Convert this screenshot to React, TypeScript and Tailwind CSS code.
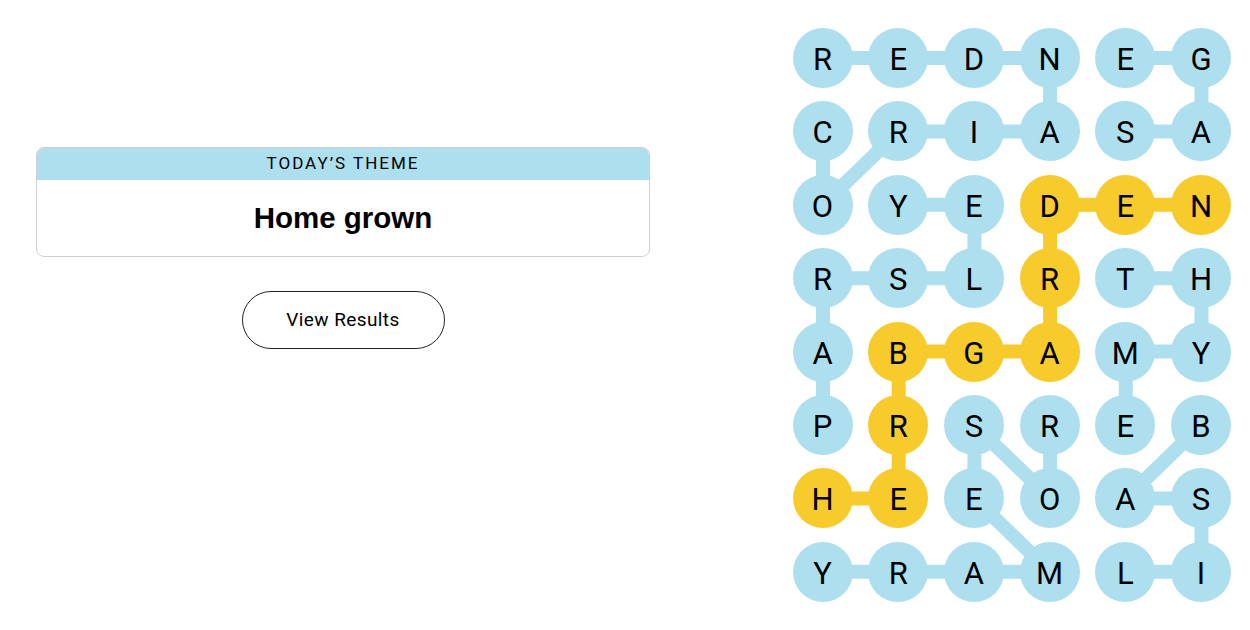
import React from "react";

const letters = [
  "REDNEG",
  "CRIASA",
  "OYEDEN",
  "RSLRTH",
  "ABGAMY",
  "PRSREB",
  "HEEOAS",
  "YRAMLI",
];

const BLUE = "#aedfee";
const YELLOW = "#f8cb2c";

type P = [number, number];
const words: { path: P[]; span?: boolean }[] = [
  { path: [[1, 0], [2, 0], [1, 1], [1, 2], [1, 3], [0, 3], [0, 2], [0, 1], [0, 0]] },
  { path: [[1, 4], [1, 5], [0, 5], [0, 4]] },
  { path: [[5, 0], [4, 0], [3, 0], [3, 1], [3, 2], [2, 2], [2, 1]] },
  { path: [[3, 4], [3, 5], [4, 5], [4, 4], [5, 4]] },
  { path: [[5, 5], [6, 4], [6, 5], [7, 5], [7, 4]] },
  { path: [[5, 3], [6, 3], [5, 2], [6, 2], [7, 3], [7, 2], [7, 1], [7, 0]] },
  { path: [[6, 0], [6, 1], [5, 1], [4, 1], [4, 2], [4, 3], [3, 3], [2, 3], [2, 4], [2, 5]], span: true },
];

const spanSet = new Set(words.filter((w) => w.span).flatMap((w) => w.path.map(([r, c]) => `${r}-${c}`)));

const cx = (c: number) => 30 + 75.7 * c;
const cy = (r: number) => 30 + 73.4 * r;

function Board() {
  return (
    <div className="relative w-[438.5px] h-[574px]">
      <svg className="absolute inset-0" width="438.5" height="574">
        {words.map((w, i) => (
          <polyline
            key={i}
            points={w.path.map(([r, c]) => `${cx(c)},${cy(r)}`).join(" ")}
            fill="none"
            stroke={w.span ? YELLOW : BLUE}
            strokeWidth={14}
            strokeLinejoin="round"
          />
        ))}
      </svg>
      <div className="relative grid grid-cols-[repeat(6,60px)] gap-x-[15.7px] gap-y-[13.4px]">
        {letters.flatMap((row, r) =>
          row.split("").map((ch, c) => (
            <div
              key={`${r}-${c}`}
              className={`w-[60px] h-[60px] rounded-full flex items-center justify-center pt-[3px] text-[31px] text-black ${
                spanSet.has(`${r}-${c}`) ? "bg-[#f8cb2c]" : "bg-[#aedfee]"
              }`}
              style={{ fontFamily: "Roboto, 'Liberation Sans', sans-serif" }}
            >
              <span className="leading-none">{ch}</span>
            </div>
          ))
        )}
      </div>
    </div>
  );
}

export default function App() {
  return (
    <div className="w-[1250px] h-[630px] bg-white flex overflow-hidden" style={{ fontFamily: "Roboto, 'Liberation Sans', sans-serif" }}>
      <div className="w-[686px] px-[36px] pt-[147px] flex flex-col items-center">
        <div className="w-full rounded-[8px] border border-[#cfcfcf] overflow-hidden">
          <div className="h-[32px] bg-[#aedfee] flex items-center justify-center text-[17px] tracking-[2px] text-black">
            TODAY’S THEME
          </div>
          <div
            className="h-[76px] flex items-center justify-center text-[29.5px] font-bold text-black"
            style={{ fontFamily: "'Liberation Sans', Arial, sans-serif" }}
          >
            Home grown
          </div>
        </div>
        <button className="mt-[34px] w-[203px] h-[58px] rounded-full border border-[#222] bg-white text-[19px] tracking-[0.4px] text-black">
          View Results
        </button>
      </div>
      <div className="ml-[106.5px] mt-[28px]">
        <Board />
      </div>
    </div>
  );
}
